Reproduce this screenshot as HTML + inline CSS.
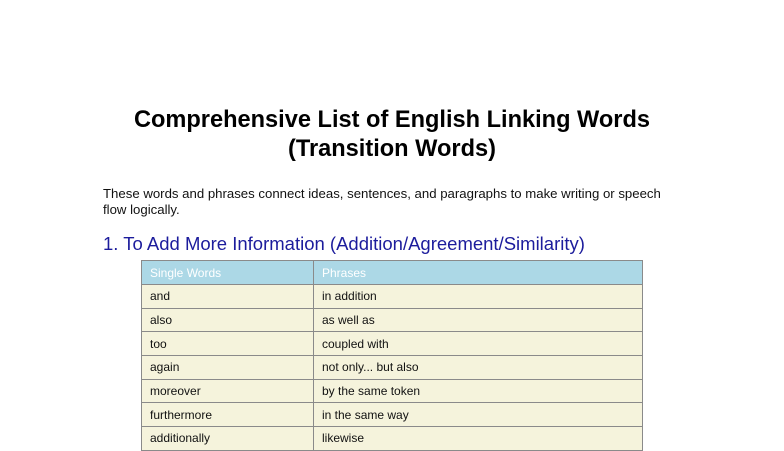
<!DOCTYPE html>
<html><head><meta charset="utf-8"><style>
html,body{margin:0;padding:0;background:#fff;width:784px;height:441px;overflow:hidden;font-family:"Liberation Sans",Arial,sans-serif;}
.t{position:absolute;left:0;width:784px;text-align:center;font-weight:bold;font-size:23.6px;color:#000;line-height:29px;}
.p{position:absolute;left:103px;top:186px;width:570px;font-size:13.2px;line-height:16px;color:#111;}
.h{position:absolute;left:103px;top:233px;font-size:18.5px;color:#1c1c9c;white-space:nowrap;}
table{position:absolute;left:141px;top:260px;width:502px;border-collapse:collapse;font-size:12px;}
td{border:1px solid #8a8a8a;height:22.7px;padding:0 0 0 8px;background:#f5f3dc;color:#111;}
tr.hd td{background:#acd8e6;color:#fff;height:23px;}
td.a{width:163px;}
</style></head><body>
<div class="t" style="top:106px">Comprehensive List of English Linking Words</div>
<div class="t" style="top:135px">(Transition Words)</div>
<div class="p">These words and phrases connect ideas, sentences, and paragraphs to make writing or speech flow logically.</div>
<div class="h">1. To Add More Information (Addition/Agreement/Similarity)</div>
<table>
<tr class="hd"><td class="a">Single Words</td><td>Phrases</td></tr>
<tr><td class="a">and</td><td>in addition</td></tr>
<tr><td class="a">also</td><td>as well as</td></tr>
<tr><td class="a">too</td><td>coupled with</td></tr>
<tr><td class="a">again</td><td>not only... but also</td></tr>
<tr><td class="a">moreover</td><td>by the same token</td></tr>
<tr><td class="a">furthermore</td><td>in the same way</td></tr>
<tr><td class="a">additionally</td><td>likewise</td></tr>
</table>
</body></html>
